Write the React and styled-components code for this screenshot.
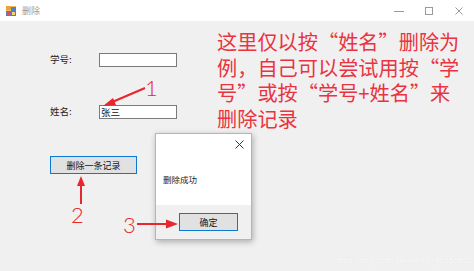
import React from "react";
import styled, { createGlobalStyle } from "styled-components";

const Global = createGlobalStyle`
  html, body { margin: 0; padding: 0; background: #f0f0f0; }
  body { font-family: "Noto Sans CJK SC", "Noto Sans", sans-serif; }
`;

const Window = styled.div`
  position: relative;
  width: 474px;
  height: 271px;
  display: flex;
  flex-direction: column;
  overflow: hidden;
  background: #f0f0f0;
`;

const TitleBar = styled.div`
  height: 21px;
  flex: none;
  background: #ffffff;
  display: flex;
  align-items: center;
  padding-left: 6px;
  gap: 6px;
`;

const Title = styled.span`
  font-size: 9px;
  color: #9a9a9a;
  line-height: 1;
  flex: 1;
`;

const Controls = styled.div`
  display: flex;
  align-items: center;
  height: 100%;
`;

const Ctrl = styled.div`
  width: 30px;
  height: 100%;
  display: flex;
  align-items: center;
  justify-content: center;
  color: #8c8c8c;
`;

const Client = styled.div`
  position: relative;
  flex: 1;
  background: #f0f0f0;
  display: flex;
  flex-direction: column;
  padding: 32px 0 0 50px;
  box-sizing: border-box;
`;

const Row = styled.div`
  display: flex;
  align-items: center;
  height: 14px;
  margin-bottom: ${(p) => p.$gap || 0}px;
`;

const Label = styled.span`
  width: 49px;
  font-size: 9.5px;
  color: #222;
  line-height: 1;
`;

const TextBox = styled.div`
  width: 75px;
  height: 12px;
  border: 1px solid #7a7a7a;
  background: #fff;
  font-size: 9.5px;
  line-height: 12px;
  padding-left: 1px;
  color: #111;
`;

const Button = styled.div`
  width: ${(p) => p.$w}px;
  height: ${(p) => p.$h}px;
  box-sizing: border-box;
  border: 1.5px solid #0a78d4;
  background: #e1e1e1;
  box-shadow: inset 0 0 0 1px #e1e1e1;
  display: flex;
  align-items: center;
  justify-content: center;
  font-size: 9px;
  color: #111;
`;

const Note = styled.div`
  position: absolute;
  left: 217px;
  top: 8px;
  font-size: 20.2px;
  line-height: 25.5px;
  color: #ea3340;
  white-space: nowrap;
`;

const Dialog = styled.div`
  position: absolute;
  left: 155px;
  top: 133px;
  width: 97px;
  height: 107px;
  box-sizing: border-box;
  border: 1px solid #b5b5b5;
  box-shadow: 1px 2px 6px rgba(0, 0, 0, 0.28);
  display: flex;
  flex-direction: column;
  background: #f0f0f0;
`;

const DialogBody = styled.div`
  position: relative;
  height: 71px;
  background: #fff;
  display: flex;
  align-items: flex-end;
  padding: 0 0 20px 7px;
  box-sizing: border-box;
  font-size: 8.5px;
  color: #222;
`;

const Close = styled.div`
  position: absolute;
  right: 7px;
  top: 6px;
  display: flex;
`;

const DialogFooter = styled.div`
  flex: 1;
  display: flex;
  justify-content: flex-end;
  align-items: flex-start;
  padding: 8px 13px 0 0;
`;

const Overlay = styled.svg`
  position: absolute;
  left: 0;
  top: 0;
  pointer-events: none;
`;

const Num = styled.text`
  font-family: "Lato", "DejaVu Sans", sans-serif;
  font-weight: 300;
  font-size: 22px;
  fill: #e8262e;
`;

const Watermark = styled.div`
  position: absolute;
  right: 3px;
  bottom: 6px;
  font-family: "Liberation Sans", sans-serif;
  font-size: 8px;
  color: rgba(255, 255, 255, 0.85);
  text-shadow: 0 0 1px rgba(200, 200, 200, 0.4);
`;

function AppIcon() {
  return (
    <svg width="10" height="10" viewBox="0 0 10 10">
      <rect x="0" y="0" width="10" height="10" fill="#f3c14b" />
      <rect x="0" y="0" width="5" height="4" fill="#e8a33a" />
      <rect x="5" y="1" width="5" height="4" fill="#4f7fd0" />
      <rect x="0" y="5" width="10" height="5" fill="#7a6cc4" />
      <rect x="1" y="6" width="3" height="3" fill="#d9534f" />
      <rect x="6" y="6" width="3" height="3" fill="#f7d36b" />
    </svg>
  );
}

export default function App() {
  return (
    <>
      <Global />
      <Window>
        <TitleBar>
          <AppIcon />
          <Title>删除</Title>
          <Controls>
            <Ctrl>
              <svg width="10" height="10" viewBox="0 0 10 10">
                <line x1="0" y1="5.5" x2="10" y2="5.5" stroke="#9a9a9a" strokeWidth="1" />
              </svg>
            </Ctrl>
            <Ctrl>
              <svg width="10" height="10" viewBox="0 0 10 10">
                <rect x="1.5" y="1.5" width="7" height="7" fill="none" stroke="#9a9a9a" strokeWidth="1" />
              </svg>
            </Ctrl>
            <Ctrl>
              <svg width="10" height="10" viewBox="0 0 10 10">
                <path d="M1.5 1.5 L8.5 8.5 M8.5 1.5 L1.5 8.5" stroke="#9a9a9a" strokeWidth="1" />
              </svg>
            </Ctrl>
          </Controls>
        </TitleBar>
        <Client>
          <Row $gap={38}>
            <Label>学号:</Label>
            <TextBox />
          </Row>
          <Row $gap={37}>
            <Label>姓名:</Label>
            <TextBox>张三</TextBox>
          </Row>
          <Button $w={87} $h={18}>删除一条记录</Button>
          <Note>
            这里仅以按“姓名”删除为
            <br />
            例，自己可以尝试用按“学
            <br />
            号”或按“学号+姓名”来
            <br />
            删除记录
          </Note>
          <Watermark>https://blog.csdn.net/weixin_45950502</Watermark>
        </Client>
        <Dialog>
          <DialogBody>
            <Close>
              <svg width="9" height="9" viewBox="0 0 9 9">
                <path d="M0.5 0.5 L8.5 8.5 M8.5 0.5 L0.5 8.5" stroke="#333" strokeWidth="1" />
              </svg>
            </Close>
            删除成功
          </DialogBody>
          <DialogFooter>
            <Button $w={59} $h={18}>确定</Button>
          </DialogFooter>
        </Dialog>
        <Overlay width="474" height="271" viewBox="0 0 474 271">
          <g stroke="#e8262e" fill="#e8262e">
            <line x1="145" y1="88" x2="110" y2="103" strokeWidth="2" />
            <polygon points="103,106 113,98 116,105" stroke="none" />
            <line x1="81" y1="204" x2="81" y2="184" strokeWidth="2" />
            <polygon points="81,176 77,186 85,186" stroke="none" />
            <line x1="137" y1="224" x2="168" y2="224" strokeWidth="2" />
            <polygon points="178,224 166,219.5 166,228.5" stroke="none" />
          </g>
          <Num x="145" y="96">1</Num>
          <Num x="71" y="223">2</Num>
          <Num x="123" y="233">3</Num>
        </Overlay>
      </Window>
    </>
  );
}
